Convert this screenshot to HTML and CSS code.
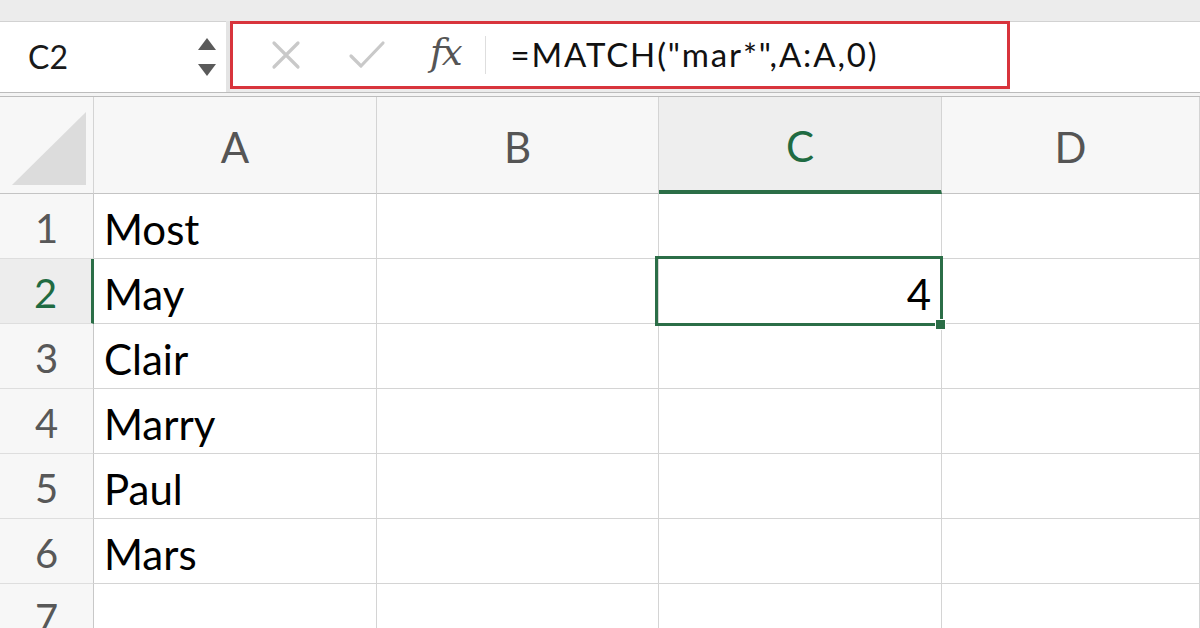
FILE: index.html
```html
<!DOCTYPE html>
<html>
<head>
<meta charset="utf-8">
<link rel="stylesheet" href="styles.css">
</head>
<body>
<div class="app">
  <div class="toolbar">
    <div class="formula-row">
      <div class="namebox">
        <span class="ref">C2</span>
        <span class="spinner">
          <svg width="20" height="42" viewBox="0 0 20 42"><path d="M10 2 L19 14 L1 14 Z" fill="#5a5a5a"/><path d="M1 28 L19 28 L10 40 Z" fill="#5a5a5a"/></svg>
        </span>
      </div>
      <div class="gap"></div>
      <div class="formula-box">
        <span class="icon cancel">
          <svg width="30" height="30" viewBox="0 0 30 30"><path d="M3 3 L27 27 M27 3 L3 27" stroke="#c9c9c9" stroke-width="3.2" stroke-linecap="round" fill="none"/></svg>
        </span>
        <span class="icon ok">
          <svg width="38" height="30" viewBox="0 0 38 30"><path d="M3 16 L13 26 L35 3" stroke="#c9c9c9" stroke-width="3.2" stroke-linecap="round" stroke-linejoin="round" fill="none"/></svg>
        </span>
        <span class="fx">fx</span>
        <span class="sep"></span>
        <span class="formula">=MATCH("mar*",A:A,0)</span>
      </div>
      <div class="rest"></div>
    </div>
    <div class="dbl"></div>
  </div>
  <div class="sheet">
    <div class="corner hdr"><svg width="94" height="97" viewBox="0 0 94 97"><path d="M12 88 L86 88 L86 15 Z" fill="#dcdcdc"/></svg></div>
    <div class="col hdr">A</div>
    <div class="col hdr">B</div>
    <div class="col hdr active">C</div>
    <div class="col hdr">D</div>

    <div class="rown">1</div><div class="cell">Most</div><div class="cell"></div><div class="cell"></div><div class="cell"></div>
    <div class="rown active">2</div><div class="cell">May</div><div class="cell"></div><div class="cell sel"><span class="num">4</span><span class="selbox"></span><span class="handle"></span></div><div class="cell"></div>
    <div class="rown">3</div><div class="cell">Clair</div><div class="cell"></div><div class="cell"></div><div class="cell"></div>
    <div class="rown">4</div><div class="cell">Marry</div><div class="cell"></div><div class="cell"></div><div class="cell"></div>
    <div class="rown">5</div><div class="cell">Paul</div><div class="cell"></div><div class="cell"></div><div class="cell"></div>
    <div class="rown">6</div><div class="cell">Mars</div><div class="cell"></div><div class="cell"></div><div class="cell"></div>
    <div class="rown">7</div><div class="cell"></div><div class="cell"></div><div class="cell"></div><div class="cell"></div>
  </div>
</div>
</body>
</html>
```
FILE: styles.css
```css
* { box-sizing: border-box; }
html, body { margin: 0; padding: 0; }
body {
  width: 1200px;
  height: 628px;
  overflow: hidden;
  background: #ffffff;
  font-family: Lato, "Open Sans", sans-serif;
}
.toolbar {
  background: #ececec;
  padding-top: 21px;
}
.formula-row {
  display: flex;
  height: 71px;
  align-items: flex-start;
}
.namebox {
  width: 226px;
  height: 71px;
  background: #fff;
  border-top: 1px solid #d2d2d2;
  display: flex;
  align-items: center;
  padding-left: 28px;
  padding-right: 9px;
}
.ref {
  flex: 1;
  font-size: 32px;
  color: #1a1a1a;
  padding-bottom: 2px;
}
.spinner { display: flex; align-items: center; }
.gap {
  width: 4px;
  height: 71px;
  background: #e4e4e4;
}
.formula-box {
  width: 780px;
  height: 68px;
  border: 3px solid #d8343c;
  background: #fff;
  display: flex;
  align-items: center;
}
.icon { display: flex; align-items: center; }
.cancel { margin-left: 38px; }
.ok { margin-left: 47px; }
.fx {
  margin-left: 44px;
  font-family: "DejaVu Serif", "Liberation Serif", serif;
  font-style: italic;
  font-size: 37px;
  color: #555;
  padding-bottom: 5px;
  letter-spacing: -2px;
}
.sep {
  width: 1px;
  height: 38px;
  background: #dedede;
  margin-left: 24px;
}
.formula {
  margin-left: 25px;
  font-size: 33px;
  letter-spacing: 1.85px;
  color: #111;
  padding-bottom: 2px;
}
.rest {
  flex: 1;
  height: 71px;
  background: #fff;
  border-top: 1px solid #d2d2d2;
}
.dbl {
  height: 5px;
  background: #f4f4f4;
  border-top: 1px solid #bcbcbc;
  border-bottom: 1px solid #bcbcbc;
}
.sheet {
  display: grid;
  grid-template-columns: 94px 283px 282px 283px 258px;
  grid-template-rows: 97px repeat(7, 65px);
}
.hdr {
  background: #f7f7f7;
  border-right: 1px solid #d4d4d4;
  border-bottom: 1px solid #c4c4c4;
}
.corner svg { display: block; }
.col {
  display: flex;
  align-items: center;
  justify-content: center;
  font-size: 42px;
  color: #555;
  padding-top: 4px;
}
.col.active {
  background: #eeeeee;
  color: #1f6b42;
  border-bottom: 4px solid #2b6e47;
}
.rown {
  background: #f7f7f7;
  border-right: 1px solid #c8c8c8;
  border-bottom: 1px solid #dedede;
  display: flex;
  align-items: center;
  justify-content: center;
  font-size: 40px;
  color: #585858;
  padding-top: 3px;
}
.rown.active {
  background: #ededed;
  color: #1f6b42;
  border-right: 3px solid #2b6e47;
}
.cell {
  border-right: 1px solid #d4d4d4;
  border-bottom: 1px solid #d4d4d4;
  display: flex;
  align-items: center;
  padding-left: 10px;
  padding-top: 5px;
  font-size: 42px;
  color: #000;
}
.sel {
  position: relative;
  justify-content: flex-end;
  padding-right: 10px;
}
.selbox {
  position: absolute;
  left: -4px;
  top: -3px;
  right: -2px;
  bottom: -3px;
  border: 3px solid #2b6e47;
}
.handle {
  position: absolute;
  right: -5px;
  bottom: -7px;
  width: 11px;
  height: 11px;
  background: #2b6e47;
  border: 1px solid #fff;
}
```
